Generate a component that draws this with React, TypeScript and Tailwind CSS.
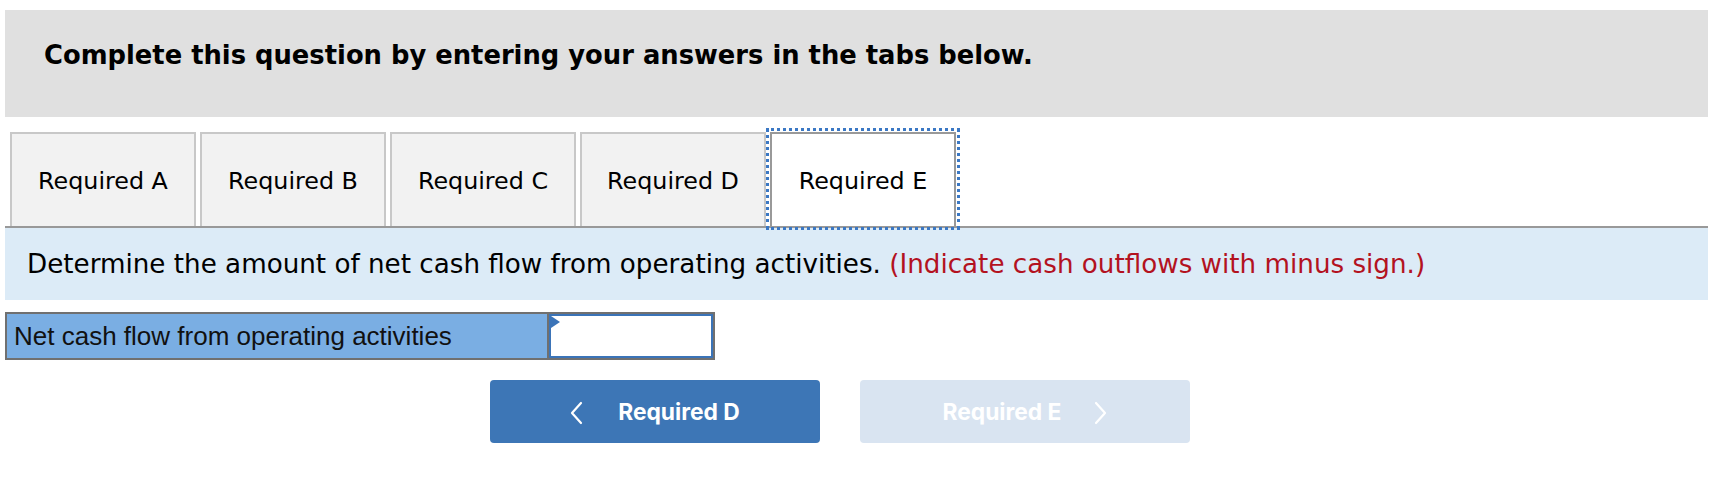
const tabs = ["Required A", "Required B", "Required C", "Required D", "Required E"]

function Chevron({ dir }: { dir: "left" | "right" }) {
    return (
        <svg width="14" height="26" viewBox="0 0 14 26" fill="none" stroke="currentColor" strokeWidth="2.2" strokeLinecap="round" strokeLinejoin="round">
            {dir === "left" ? <polyline points="11,3 2,13 11,23" /> : <polyline points="3,3 12,13 3,23" />}
        </svg>
    )
}

export default function App() {
    const active = "Required E"

    return (
        <div className="w-[1724px] h-[504px] bg-white font-['Verdana','DejaVu_Sans',sans-serif] text-black">
            <div className="pt-[10px] pl-[5px] w-[1708px]">
                <div className="h-[107px] bg-[#e0e0e0] pl-[39px] pt-[29px]">
                    <h1 className="text-[25.8px] font-bold leading-[32px]">
                        Complete this question by entering your answers in the tabs below.
                    </h1>
                </div>

                <div className="mt-[15px] flex gap-[4px] pl-[5px] border-b-2 border-[#999999]">
                    {tabs.map((t) => (
                        <div
                            key={t}
                            className={
                                t === active
                                    ? "w-[186px] h-[94px] flex items-center justify-center pt-[4px] border-2 border-b-0 border-[#999999] bg-white outline-[3px] outline-dotted outline-[#3b78c4] outline-offset-1 text-[23.8px]"
                                    : "w-[186px] h-[94px] flex items-center justify-center pt-[4px] border-2 border-b-0 border-[#c8c8c8] bg-[#f2f2f2] text-[23.8px]"
                            }
                        >
                            {t}
                        </div>
                    ))}
                </div>

                <div className="h-[72px] bg-[#dcebf7] flex items-center pl-[22px] pt-[2px] text-[26.2px]">
                    <p>
                        Determine the amount of net cash flow from operating activities.{" "}
                        <span className="text-[#b3121f]">(Indicate cash outflows with minus sign.)</span>
                    </p>
                </div>

                <div className="mt-[12px] flex h-[48px]">
                    <div className="w-[544px] border-2 border-[#707070] bg-[#7aaee3] flex items-center pl-[7px] font-['Liberation_Sans',Arial,sans-serif] text-[26px] text-[#111]">
                        Net cash flow from operating activities
                    </div>
                    <div className="w-[166px] border-2 border-l-0 border-[#707070]">
                        <div className="relative h-full border-2 border-[#3b74b8] bg-white">
                            <div className="absolute left-0 top-0 w-0 h-0 border-y-[6px] border-y-transparent border-l-[9px] border-l-[#3b74b8]" />
                        </div>
                    </div>
                </div>

                <div className="mt-[20px] flex gap-[40px] pl-[485px] font-['Inter',sans-serif]">
                    <button className="w-[330px] h-[63px] pt-[2px] rounded-[4px] bg-[#3d76b6] text-white flex items-center justify-center gap-[34px] text-[22.8px] font-bold">
                        <Chevron dir="left" />
                        <span>Required D</span>
                    </button>
                    <button className="w-[330px] h-[63px] pt-[2px] rounded-[4px] bg-[#d9e4f1] text-white flex items-center justify-center gap-[32px] text-[22.8px] font-bold">
                        <span>Required E</span>
                        <Chevron dir="right" />
                    </button>
                </div>
            </div>
        </div>
    )
}
